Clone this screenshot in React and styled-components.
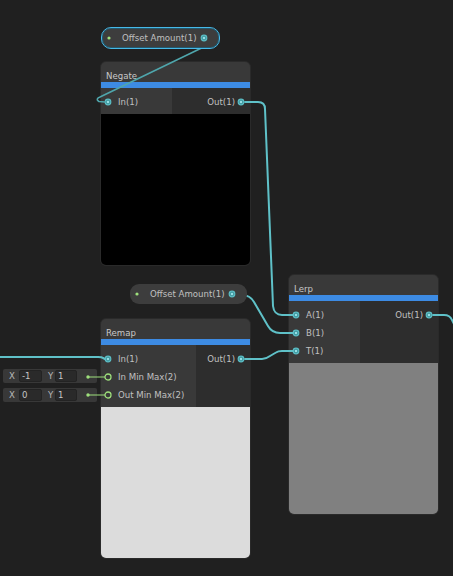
import React from 'react';
import styled, { createGlobalStyle, css } from 'styled-components';

const Global = createGlobalStyle`
  html, body { margin: 0; padding: 0; background: #202020; }
  body { font-family: "DejaVu Sans", Verdana, sans-serif; }
`;

const Canvas = styled.div`
  position: relative;
  width: 453px;
  height: 576px;
  overflow: hidden;
  background: #202020;
`;

const NodeBox = styled.div`
  position: absolute;
  left: ${(p) => p.$x}px;
  top: ${(p) => p.$y}px;
  width: 151px;
  box-sizing: border-box;
  border: 1px solid #2a2a2a;
  border-radius: 6px;
  overflow: hidden;
  background: #2d2d2d;
  display: flex;
  flex-direction: column;
`;

const Header = styled.div`
  height: 20px;
  box-sizing: border-box;
  padding: 9px 0 0 5px;
  background: #393939;
  color: #c8c8c8;
  font-size: 8.6px;
  line-height: 11px;
  white-space: nowrap;
`;

const Accent = styled.div`
  height: 6px;
  background: #3d8be3;
`;

const Ports = styled.div`
  display: flex;
`;

const InputCol = styled.div`
  min-width: 71px;
  box-sizing: border-box;
  padding: 5px 12px 3px 3px;
  background: #393939;
  display: flex;
  flex-direction: column;
`;

const OutputCol = styled.div`
  flex: 1;
  box-sizing: border-box;
  padding: 5px 5px 3px 0;
  background: #2d2d2d;
  display: flex;
  flex-direction: column;
`;

const PortRow = styled.div`
  height: 18px;
  display: flex;
  align-items: center;
  justify-content: ${(p) => (p.$out ? 'flex-end' : 'flex-start')};
  gap: ${(p) => (p.$out ? '2px' : '6px')};
  color: #c0c0c0;
  font-size: 8.6px;
  line-height: 11px;
  white-space: nowrap;
`;

const Preview = styled.div`
  height: 151px;
  background: ${(p) => p.$bg};
`;

const PortIcon = styled.svg`
  width: 8px;
  height: 8px;
  flex: none;
  display: block;
`;

const Pill = styled.div`
  position: absolute;
  left: ${(p) => p.$x}px;
  top: ${(p) => p.$y}px;
  width: 117px;
  height: 20px;
  box-sizing: border-box;
  border-radius: 9px;
  background: #3d3d3d;
  display: flex;
  align-items: center;
  padding: 0 11px 0 5px;
  color: #c0c0c0;
  font-size: 8.6px;
  line-height: 11px;
  white-space: nowrap;
  ${(p) =>
    p.$selected &&
    css`
      outline: 1px solid #46b9e8;
      box-shadow: inset 0 0 0 1px #24586c;
    `}
`;

const PillLabel = styled.span`
  margin-left: 11px;
`;

const PillPort = styled.span`
  margin-left: auto;
  display: flex;
`;

const Dot = styled.svg`
  width: 4px;
  height: 4px;
  flex: none;
  display: block;
`;

const FieldStack = styled.div`
  position: absolute;
  left: 3px;
  top: 369px;
  display: flex;
  flex-direction: column;
  gap: 5px;
`;

const FieldRow = styled.div`
  width: 94px;
  height: 14px;
  box-sizing: border-box;
  background: #383838;
  border-radius: 2px;
  display: flex;
  align-items: center;
  padding-left: 6px;
  font-size: 8.6px;
  line-height: 10px;
  color: #c6c6c6;
`;

const Axis = styled.span`
  width: ${(p) => p.$w}px;
  margin-left: ${(p) => p.$ml || 0}px;
  color: #b8b8b8;
`;

const NumField = styled.span`
  width: ${(p) => p.$w}px;
  height: 12px;
  box-sizing: border-box;
  background: #2a2a2a;
  border: 1px solid #232323;
  border-radius: 2px;
  padding-left: 2px;
  display: flex;
  align-items: center;
`;

const EdgeLayer = styled.svg`
  position: absolute;
  left: 0;
  top: 0;
  width: 453px;
  height: 576px;
  pointer-events: none;
`;

const CYAN = '#5fc1c8';
const GREEN = '#9ee07c';

const CyanPort = () => (
  <PortIcon viewBox="0 0 8 8">
    <circle cx="4" cy="4" r="3.4" fill="#5cbfc7" />
    <circle cx="4" cy="4" r="1.9" fill="none" stroke="#3b8a90" strokeWidth="0.8" />
    <circle cx="4" cy="4" r="1" fill="#a8e9ee" />
  </PortIcon>
);

const GreenPort = () => (
  <PortIcon viewBox="0 0 8 8">
    <circle cx="4" cy="4" r="3" fill="none" stroke={GREEN} strokeWidth="1.3" />
  </PortIcon>
);

const GreenDot = () => (
  <Dot viewBox="0 0 4 4">
    <circle cx="2" cy="2" r="1.6" fill={GREEN} />
  </Dot>
);

const Node = ({ x, y, title, inputs, outputs, preview }) => (
  <NodeBox $x={x} $y={y}>
    <Header>{title}</Header>
    <Accent />
    <Ports>
      <InputCol>
        {inputs.map((p) => (
          <PortRow key={p.label}>
            {p.kind === 'vec2' ? <GreenPort /> : <CyanPort />}
            <span>{p.label}</span>
          </PortRow>
        ))}
      </InputCol>
      <OutputCol>
        {outputs.map((p) => (
          <PortRow $out key={p}>
            <span>{p}</span>
            <CyanPort />
          </PortRow>
        ))}
      </OutputCol>
    </Ports>
    <Preview $bg={preview} />
  </NodeBox>
);

const PropertyPill = ({ x, y, selected }) => (
  <Pill $x={x} $y={y} $selected={selected}>
    <GreenDot />
    <PillLabel>Offset Amount(1)</PillLabel>
    <PillPort>
      <CyanPort />
    </PillPort>
  </Pill>
);

const VecField = ({ xv, yv }) => (
  <FieldRow>
    <Axis $w={10}>X</Axis>
    <NumField $w={23}>{xv}</NumField>
    <Axis $w={7} $ml={6}>Y</Axis>
    <NumField $w={22}>{yv}</NumField>
  </FieldRow>
);

export default function App() {
  return (
    <>
      <Global />
      <Canvas>
        <Node
          x={100}
          y={61}
          title="Negate"
          inputs={[{ label: 'In(1)' }]}
          outputs={['Out(1)']}
          preview="#000000"
        />
        <Node
          x={100}
          y={318}
          title="Remap"
          inputs={[
            { label: 'In(1)' },
            { label: 'In Min Max(2)', kind: 'vec2' },
            { label: 'Out Min Max(2)', kind: 'vec2' },
          ]}
          outputs={['Out(1)']}
          preview="#dcdcdc"
        />
        <Node
          x={288}
          y={274}
          title="Lerp"
          inputs={[{ label: 'A(1)' }, { label: 'B(1)' }, { label: 'T(1)' }]}
          outputs={['Out(1)']}
          preview="#808080"
        />
        <FieldStack>
          <VecField xv="-1" yv="1" />
          <VecField xv="0" yv="1" />
        </FieldStack>
        <EdgeLayer viewBox="0 0 453 576">
          <g fill="none" stroke={CYAN} strokeWidth="2" strokeLinecap="round" strokeLinejoin="round">
            <path
              d="M204 38 L212 38 Q219 38 214 42 L100 97 Q95 99 99 101.5 L105 102"
              stroke="#4fa6ac"
              strokeWidth="1.6"
            />
            <path d="M245 102 L258 102 Q265 102 265 109 L273 306 Q274 315 282 315 L293 315" />
            <path d="M232 295 L242 295 Q250 295 254 302 L268 326 Q272 333 280 333 L293 333" />
            <path d="M245 359 L262 359 Q266 359 270 356 L276 352.5 Q278 351 282 351 L293 351" />
            <path d="M-5 357 L98 357 Q102 357 103 358 L105 359" />
            <path d="M433 315 L444 315 Q450 315 452 320 L458 332" />
          </g>
          <g>
            <line x1="88" y1="377" x2="105" y2="377" stroke={GREEN} strokeWidth="1" />
            <circle cx="88" cy="377" r="1.7" fill={GREEN} />
            <line x1="88" y1="395" x2="105" y2="395" stroke={GREEN} strokeWidth="1" />
            <circle cx="88" cy="395" r="1.7" fill={GREEN} />
          </g>
        </EdgeLayer>
        <PropertyPill x={102} y={28} selected />
        <PropertyPill x={130} y={284} />
      </Canvas>
    </>
  );
}
